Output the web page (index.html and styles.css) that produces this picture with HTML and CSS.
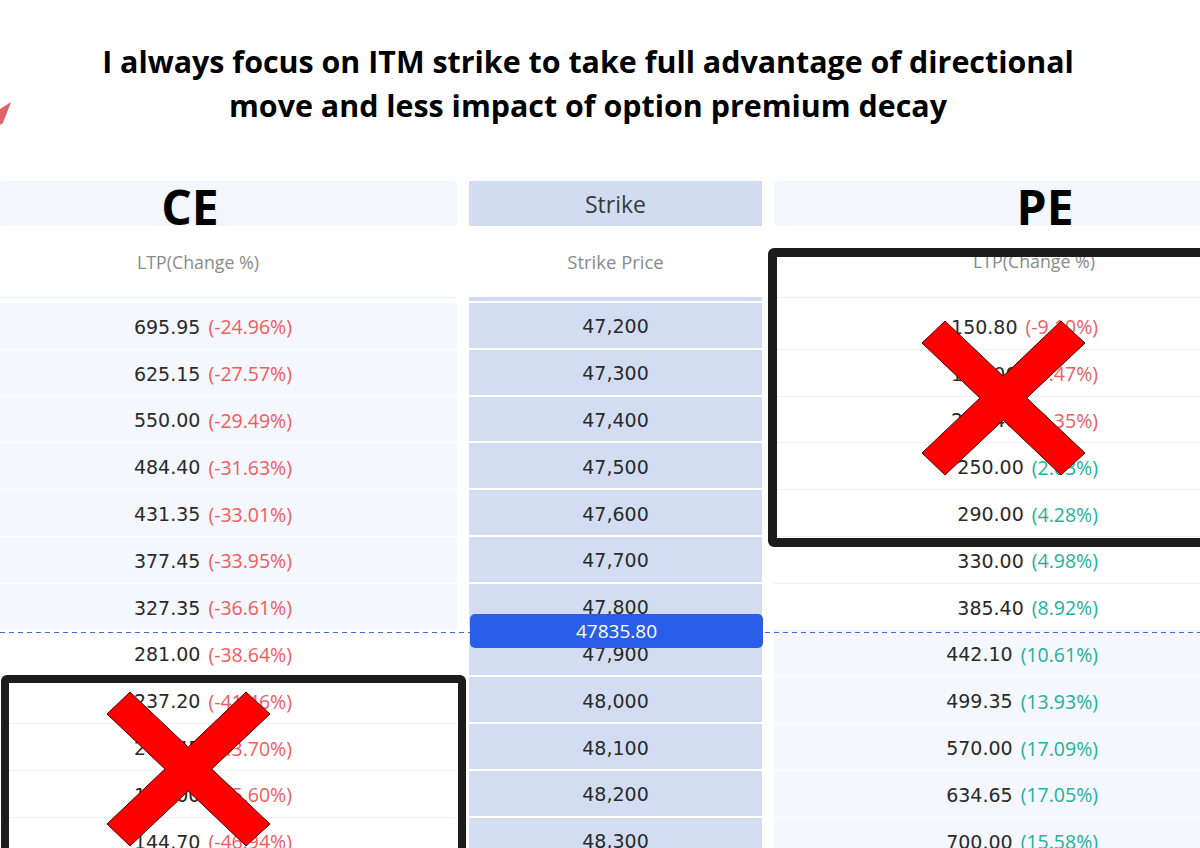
FILE: index.html
```html
<!DOCTYPE html>
<html lang="en">
<head>
<meta charset="utf-8">
<title>ITM strike focus</title>
<link rel="stylesheet" href="styles.css">
</head>
<body>
<div class="page">
  <svg class="arrow" viewBox="0 0 12 26" width="12" height="26"><polygon points="0,9 11,2 3,23 0,25" fill="#e0636a"/></svg>
  <h1 class="title">I always focus on ITM strike to take full advantage of directional<br>move and less impact of option premium decay</h1>

  <div class="chain">
    <div class="hd hd-ce"><span class="side-label">CE</span></div>
    <div class="hd hd-strike">Strike</div>
    <div class="hd hd-pe"><span class="side-label">PE</span></div>

    <div class="sub sub-ce">LTP(Change %)</div>
    <div class="sub sub-strike">Strike Price</div>
    <div class="sub sub-pe">LTP(Change %)</div>

    <div class="gap"></div><div class="gap gap-strike"></div><div class="gap"></div>

    <div class="cell ce itm"><span class="price">695.95</span><span class="chg neg">(-24.96%)</span></div>
    <div class="cell st">47,200</div>
    <div class="cell pe"><span class="price">150.80</span><span class="chg neg">(-9.10%)</span></div>

    <div class="cell ce itm"><span class="price">625.15</span><span class="chg neg">(-27.57%)</span></div>
    <div class="cell st">47,300</div>
    <div class="cell pe"><span class="price">178.00</span><span class="chg neg">(-6.47%)</span></div>

    <div class="cell ce itm"><span class="price">550.00</span><span class="chg neg">(-29.49%)</span></div>
    <div class="cell st">47,400</div>
    <div class="cell pe"><span class="price">211.40</span><span class="chg neg">(-3.35%)</span></div>

    <div class="cell ce itm"><span class="price">484.40</span><span class="chg neg">(-31.63%)</span></div>
    <div class="cell st">47,500</div>
    <div class="cell pe"><span class="price">250.00</span><span class="chg pos">(2.03%)</span></div>

    <div class="cell ce itm"><span class="price">431.35</span><span class="chg neg">(-33.01%)</span></div>
    <div class="cell st">47,600</div>
    <div class="cell pe"><span class="price">290.00</span><span class="chg pos">(4.28%)</span></div>

    <div class="cell ce itm"><span class="price">377.45</span><span class="chg neg">(-33.95%)</span></div>
    <div class="cell st">47,700</div>
    <div class="cell pe"><span class="price">330.00</span><span class="chg pos">(4.98%)</span></div>

    <div class="cell ce itm"><span class="price">327.35</span><span class="chg neg">(-36.61%)</span></div>
    <div class="cell st">47,800</div>
    <div class="cell pe"><span class="price">385.40</span><span class="chg pos">(8.92%)</span></div>

    <div class="spot"><div class="spot-line"></div><div class="spot-pill">47835.80</div></div>

    <div class="cell ce"><span class="price">281.00</span><span class="chg neg">(-38.64%)</span></div>
    <div class="cell st">47,900</div>
    <div class="cell pe itm"><span class="price">442.10</span><span class="chg pos">(10.61%)</span></div>

    <div class="cell ce"><span class="price">237.20</span><span class="chg neg">(-41.46%)</span></div>
    <div class="cell st">48,000</div>
    <div class="cell pe itm"><span class="price">499.35</span><span class="chg pos">(13.93%)</span></div>

    <div class="cell ce"><span class="price">200.45</span><span class="chg neg">(-43.70%)</span></div>
    <div class="cell st">48,100</div>
    <div class="cell pe itm"><span class="price">570.00</span><span class="chg pos">(17.09%)</span></div>

    <div class="cell ce"><span class="price">166.00</span><span class="chg neg">(-45.60%)</span></div>
    <div class="cell st">48,200</div>
    <div class="cell pe itm"><span class="price">634.65</span><span class="chg pos">(17.05%)</span></div>

    <div class="cell ce"><span class="price">144.70</span><span class="chg neg">(-46.94%)</span></div>
    <div class="cell st">48,300</div>
    <div class="cell pe itm"><span class="price">700.00</span><span class="chg pos">(15.58%)</span></div>
  </div>

  <div class="box box-pe"></div>
  <div class="box box-ce"></div>

  <svg class="cross cross-pe" viewBox="0 0 164 155" width="164" height="155"><polygon points="0,22 23,0 81.2,55.2 139,0 163,22 104.7,77 163,132 139,154 81.2,99.1 23,154 0,132 57.9,77" fill="#ff0000" stroke="#4a0000" stroke-width="1"/></svg>
  <svg class="cross cross-ce" viewBox="0 0 164 155" width="164" height="155"><polygon points="0,22 23,0 81.2,55.2 139,0 163,22 104.7,77 163,132 139,154 81.2,99.1 23,154 0,132 57.9,77" fill="#ff0000" stroke="#4a0000" stroke-width="1"/></svg>
</div>
</body>
</html>
```

FILE: styles.css
```css
* { box-sizing: border-box; }

body {
  margin: 0;
  background: #ffffff;
}

.page {
  position: relative;
  width: 1200px;
  height: 848px;
  overflow: hidden;
  font-family: "Open Sans", "Noto Sans", sans-serif;
  background: #ffffff;
}

.arrow {
  position: absolute;
  left: 0;
  top: 100px;
}

.title {
  margin: 0;
  padding: 40px 24px 0 0;
  font-size: 30.4px;
  line-height: 44px;
  font-weight: 700;
  text-align: center;
  color: #000000;
}

.chain {
  display: grid;
  grid-template-columns: 457px 293px 1fr;
  column-gap: 12px;
  margin-top: 53px;
}

.hd {
  height: 45px;
  display: flex;
  justify-content: center;
  align-items: center;
}

.hd-ce {
  background: #f3f6fd;
  border-radius: 4px;
  padding-right: 77px;
}

.hd-pe {
  background: #f3f6fd;
  border-radius: 4px 0 0 4px;
  padding-left: 116px;
}

.side-label {
  align-self: flex-start;
  font-size: 48px;
  line-height: 51px;
  font-weight: 700;
  color: #000000;
}

.hd-strike {
  background: #d1dcf3;
  font-size: 23px;
  color: #3a3a3a;
}

.sub {
  height: 71px;
  display: flex;
  align-items: center;
  justify-content: center;
  font-size: 17.8px;
  color: #8a8a8a;
}

.sub-strike { font-size: 18.5px; }
.sub-ce { padding-right: 61px; }
.sub-pe { padding-left: 94px; padding-bottom: 2px; }

.gap {
  height: 6px;
  border-top: 1px solid #eceff6;
}

.gap-strike {
  border-top: 0;
  background: #d1dcf3;
  border-bottom: 2px solid #ffffff;
}

.cell {
  height: 46.8px;
  display: flex;
  align-items: center;
  padding-top: 2px;
  font-family: "DejaVu Sans", sans-serif;
  font-size: 19px;
  color: #2a2a2a;
}

.ce {
  justify-content: flex-end;
  padding-right: 165px;
  border-bottom: 1px solid #eef0f5;
}

.pe {
  justify-content: flex-end;
  padding-right: 102px;
  border-bottom: 1px solid #eef0f5;
}

.itm {
  background: #f4f7fd;
  border-bottom-color: #ffffff;
}

.st {
  justify-content: center;
  background: #d2ddf4;
  border-bottom: 2px solid #ffffff;
}

.price {
  font-family: "DejaVu Sans", sans-serif;
  font-size: 19px;
  color: #2a2a2a;
}

.chg {
  font-family: "Open Sans", sans-serif;
  font-size: 19.5px;
  margin-left: 8px;
}

.neg { color: #f25b5f; }
.pos { color: #1fb19b; }

.spot {
  grid-column: 1 / -1;
  height: 0;
  position: relative;
}

.spot-line {
  position: absolute;
  left: 0;
  right: 0;
  top: 1px;
  height: 1.5px;
  background: repeating-linear-gradient(90deg, #4766e0 0 5px, transparent 5px 9px);
}

.spot-pill {
  position: absolute;
  left: 470px;
  width: 293px;
  top: -17px;
  height: 34px;
  border-radius: 5px;
  background: #2a5ee8;
  color: #ffffff;
  font-size: 19px;
  display: flex;
  align-items: center;
  justify-content: center;
}

.box {
  position: absolute;
  border: 9px solid #1c1c1c;
  border-radius: 6px;
}

.box-pe {
  left: 768px;
  top: 248px;
  width: 460px;
  height: 299px;
}

.box-ce {
  left: 1px;
  top: 675px;
  width: 465px;
  height: 200px;
  border-width: 8px;
}

.cross {
  position: absolute;
}

.cross-pe { left: 922px; top: 321px; }
.cross-ce { left: 107px; top: 692px; }
```
